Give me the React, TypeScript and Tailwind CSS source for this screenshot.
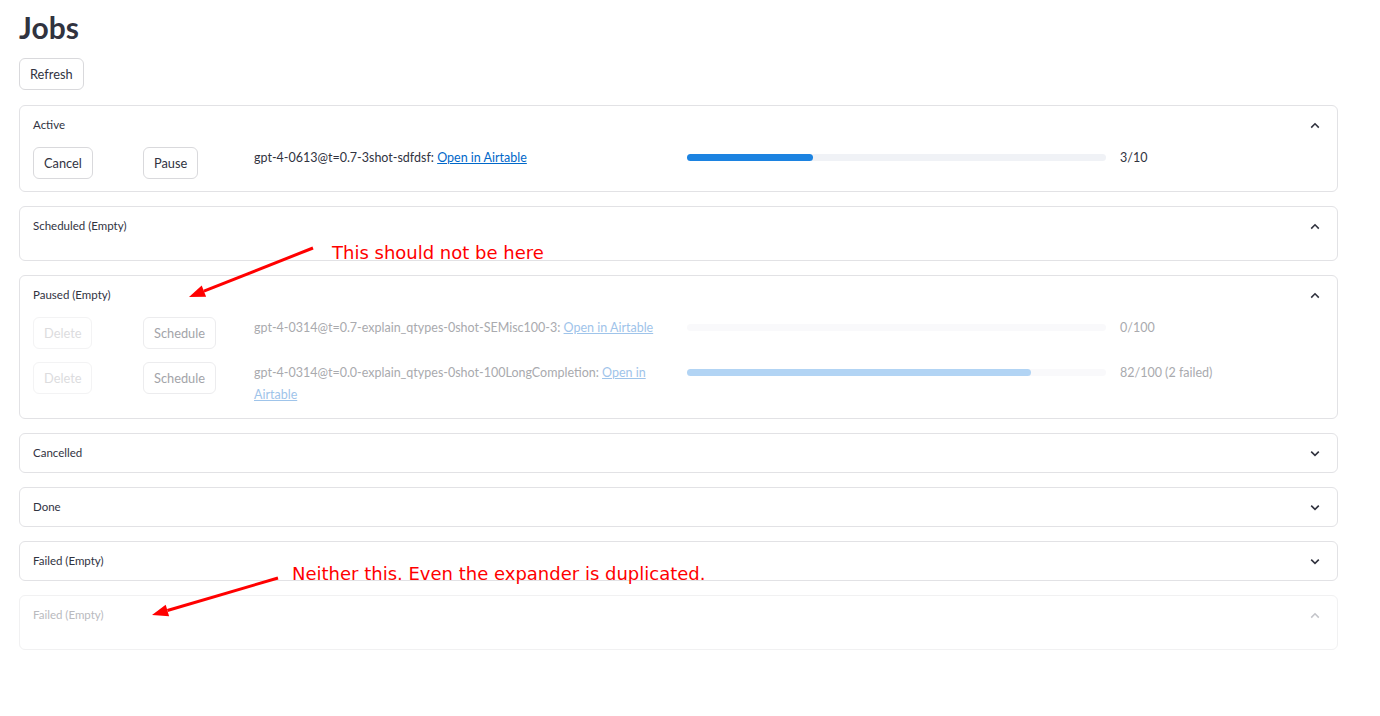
import React from "react";

const FONT = "font-['Lato','Noto_Sans',sans-serif]";

function Chevron({ up, faded }: { up: boolean; faded?: boolean }) {
  return (
    <svg width="10" height="7" viewBox="0 0 10 7" className="shrink-0">
      <path
        d={up ? "M1.2 5.6 L5 1.8 L8.8 5.6" : "M1.2 1.6 L5 5.4 L8.8 1.6"}
        fill="none"
        stroke={faded ? "#c4c5ca" : "#31333F"}
        strokeWidth="1.6"
      />
    </svg>
  );
}

function Btn({ children, faint, disabled }: { children: React.ReactNode; faint?: boolean; disabled?: boolean }) {
  return (
    <button
      className={
        "h-[32px] w-fit rounded-[6px] border bg-white px-[10px] text-[12.8px] leading-none " +
        (disabled
          ? "border-[#f3f3f4] text-[#dcdcde]"
          : faint
          ? "border-[#ececee] text-[#a3a4a9]"
          : "border-[#d9d9dc] text-[#31333F]")
      }
    >
      {children}
    </button>
  );
}

function Expander({
  label,
  open,
  faded,
  children,
}: {
  label: string;
  open: boolean;
  faded?: boolean;
  children?: React.ReactNode;
}) {
  return (
    <div className={"rounded-[6px] border " + (faded ? "border-[#f1f1f2]" : "border-[#e2e2e5]")}>
      <div className="flex h-[38px] items-center justify-between pl-[13px] pr-[17px]">
        <span className={"text-[11.5px] " + (faded ? "text-[#b9babe]" : "text-[#31333F]")}>{label}</span>
        <Chevron up={open} faded={faded} />
      </div>
      {open && <div className="px-[13px] pb-[12px] pt-[3px]">{children}</div>}
    </div>
  );
}

function Row({
  buttonA,
  buttonB,
  name,
  pct,
  count,
  paused,
}: {
  buttonA: string;
  buttonB: string;
  name: string;
  pct: number;
  count: string;
  paused?: boolean;
}) {
  return (
    <div className="grid grid-cols-[96px_97px_419px_419px_1fr] gap-x-[14px] text-[12.5px] leading-[22px]">
      <div>
        <Btn disabled={paused}>{buttonA}</Btn>
      </div>
      <div>
        <Btn faint={paused}>{buttonB}</Btn>
      </div>
      <div className={paused ? "text-[#a9aaae]" : "text-[#31333F]"}>
        {name}:{" "}
        <a className={"underline " + (paused ? "text-[#9fc4ea]" : "text-[#0068c9]")} href="#">
          Open in Airtable
        </a>
      </div>
      <div className="pt-[7px]">
        <div className={"h-[7px] w-full rounded-full " + (paused ? "bg-[#f9f9fb]" : "bg-[#f0f2f6]")}>
          <div
            className={"h-full rounded-full " + (paused ? "bg-[#b2d4f4]" : "bg-[#1c83e1]")}
            style={{ width: `${pct}%` }}
          />
        </div>
      </div>
      <div className={paused ? "text-[#a9aaae]" : "text-[#31333F]"}>{count}</div>
    </div>
  );
}

export default function App() {
  return (
    <div className={"relative min-h-[716px] w-[1380px] bg-white " + FONT}>
      <div className="w-[1338px] pl-[19px]">
        <h1 className="pt-[9px] text-[30px] font-bold leading-[36px] text-[#31333F]">Jobs</h1>
        <div className="mt-[13px]">
          <Btn>Refresh</Btn>
        </div>
        <div className="mt-[15px] flex flex-col gap-[14px]">
          <Expander label="Active" open>
            <Row
              buttonA="Cancel"
              buttonB="Pause"
              name="gpt-4-0613@t=0.7-3shot-sdfdsf"
              pct={30}
              count="3/10"
            />
          </Expander>
          <Expander label="Scheduled (Empty)" open />
          <Expander label="Paused (Empty)" open>
            <div className="flex flex-col gap-[13px]">
              <Row
                buttonA="Delete"
                buttonB="Schedule"
                name="gpt-4-0314@t=0.7-explain_qtypes-0shot-SEMisc100-3"
                pct={0}
                count="0/100"
                paused
              />
              <Row
                buttonA="Delete"
                buttonB="Schedule"
                name="gpt-4-0314@t=0.0-explain_qtypes-0shot-100LongCompletion"
                pct={82}
                count="82/100 (2 failed)"
                paused
              />
            </div>
          </Expander>
          <Expander label="Cancelled" open={false} />
          <Expander label="Done" open={false} />
          <Expander label="Failed (Empty)" open={false} />
          <Expander label="Failed (Empty)" open faded />
        </div>
      </div>

      {/* annotations overlay */}
      <svg className="pointer-events-none absolute left-0 top-0" width="1380" height="716">
        <line x1="313" y1="248" x2="203.9" y2="291.1" stroke="#ff0000" strokeWidth="3" />
        <polygon points="189,297 206.1,296.7 201.7,285.5" fill="#ff0000" />
        <line x1="278" y1="578" x2="167.4" y2="610.5" stroke="#ff0000" strokeWidth="3" />
        <polygon points="152,615 169.1,616.3 165.7,604.7" fill="#ff0000" />
      </svg>
      <span className="pointer-events-none absolute left-[332px] top-[242px] whitespace-nowrap font-['DejaVu_Sans',sans-serif] text-[18px] leading-[22px] text-[#ff0000]">
        This should not be here
      </span>
      <span className="pointer-events-none absolute left-[292px] top-[563px] whitespace-nowrap font-['DejaVu_Sans',sans-serif] text-[18px] leading-[22px] text-[#ff0000]">
        Neither this. Even the expander is duplicated.
      </span>
    </div>
  );
}
